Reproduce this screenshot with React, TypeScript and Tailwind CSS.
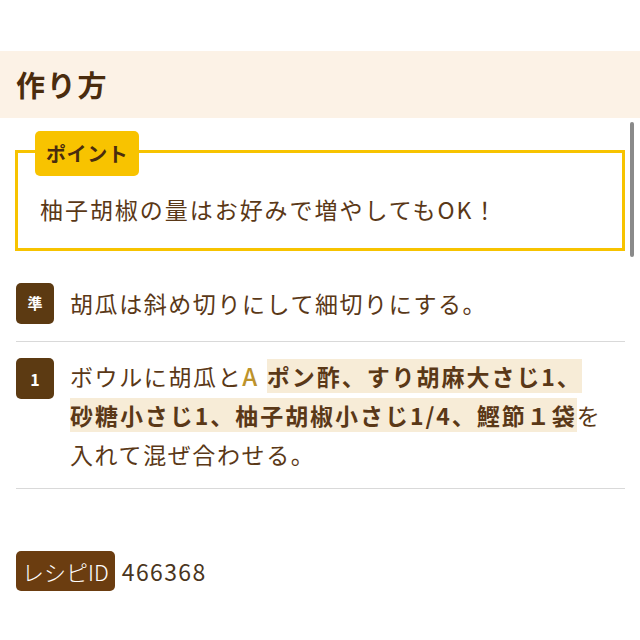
import React from "react";

const jp = { fontFamily: '"Noto Sans CJK JP", "Noto Sans", sans-serif' };

export default function App() {
  return (
    <div className="relative w-[640px] h-[640px] bg-white overflow-hidden text-[#5a3817]" style={jp}>
      <div className="h-[51px]" />
      <div className="h-[67px] bg-[#fcf2e6] flex items-center pl-[16px]">
        <h2 className="text-[29px] font-bold tracking-[0.06em] text-[#4a2c0e] leading-none">作り方</h2>
      </div>

      <div className="px-[15px] pt-[32px]">
        <div className="relative border-[3px] border-[#f7c300] h-[101px] flex items-center pl-[22px]">
          <div className="absolute left-[17px] top-[-22px] h-[45px] px-[11px] bg-[#f8c300] rounded-[5px] flex items-center text-[20px] tracking-[0.03em] font-bold text-[#4a2c0e]">
            ポイント
          </div>
          <p className="text-[23px] tracking-[0.085em] pt-[18px] leading-none">柚子胡椒の量はお好みで増やしてもOK！</p>
        </div>
      </div>

      <div className="px-[16px] pt-[32px]">
        <div className="flex items-start gap-[16px] pb-[17px] border-b border-[#d9d9d9] mr-[-1px]">
          <div className="w-[38px] h-[41px] rounded-[5px] bg-[#5c3a12] text-white text-[15px] font-bold flex items-center justify-center shrink-0">準</div>
          <p className="text-[23px] tracking-[0.068em] leading-[40px]">胡瓜は斜め切りにして細切りにする。</p>
        </div>
        <div className="flex items-start gap-[16px] pt-[16px] pb-[14px] border-b border-[#d9d9d9] mr-[-1px]">
          <div className="w-[38px] h-[41px] rounded-[5px] bg-[#5c3a12] text-white text-[16px] font-bold flex items-center justify-center shrink-0">1</div>
          <p className="text-[23px] tracking-[0.07em] leading-[39px] mt-[-2px]">
            ボウルに胡瓜と<span className="text-[#bd932c] font-medium text-[24px] mr-[8px]">A</span>
            <span className="bg-[#f7ecd7] font-bold box-decoration-clone tracking-[0.085em]">
              ポン酢、すり胡麻大さじ1、
              <br />
              砂糖小さじ1、柚子胡椒小さじ1/4、鰹節１袋
            </span>
            を
            <br />
            入れて混ぜ合わせる。
          </p>
        </div>
      </div>

      <div className="pl-[16px] pt-[62px] flex items-center gap-[7px]">
        <div className="h-[40px] px-[6px] rounded-[5px] bg-[#6b3d10] text-white text-[22px] font-light flex items-center">レシピID</div>
        <span className="text-[23px] tracking-[0.06em] text-[#4a3520]">466368</span>
      </div>

      <div className="absolute left-[630px] top-[122px] w-[4px] h-[135px] rounded-full bg-[#8a8a8a]" />
    </div>
  );
}
